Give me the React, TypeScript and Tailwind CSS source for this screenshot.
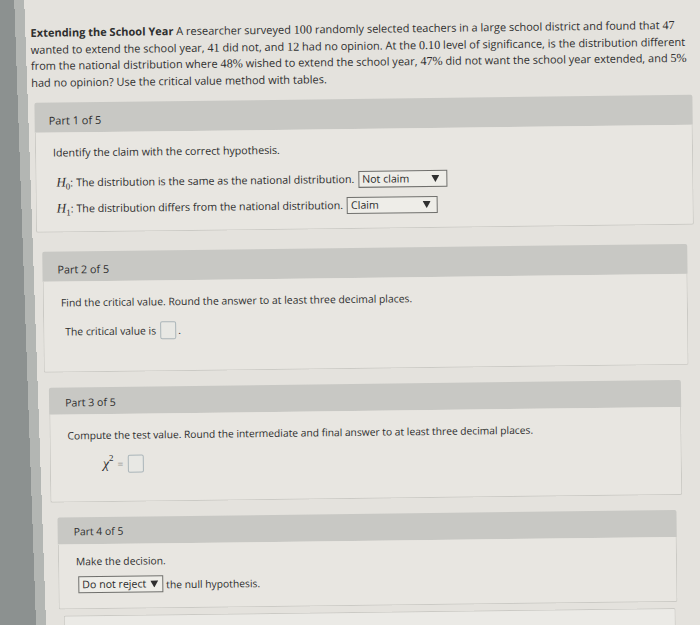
import React from "react";

function Arrow() {
  return (
    <svg width="8" height="7" viewBox="0 0 8 7" className="shrink-0">
      <polygon points="0,0 8,0 4,7" fill="#2f2f2f" />
    </svg>
  );
}

function Select({ label, w, pr }: { label: string; w: string; pr: string }) {
  return (
    <div
      className={`inline-flex h-[17px] items-center justify-between border border-[#6f6f6c] bg-[#eeede8] pl-[3px] ${w} ${pr}`}
    >
      <span className="text-[10.6px] leading-none text-[#2a2a2a]">{label}</span>
      <Arrow />
    </div>
  );
}

function Box() {
  return (
    <div className="inline-block h-[18px] w-[16px] rounded-[2px] border border-[#aab5b9] bg-[#e8e8e4]" />
  );
}

function H({ n }: { n: string }) {
  return (
    <span className="inline-flex items-baseline">
      <span className="font-['Liberation_Serif',serif] text-[13px] italic leading-none">H</span>
      <span className="relative top-[3px] font-['Liberation_Serif',serif] text-[9px] leading-none">{n}</span>
      <span>:</span>
    </span>
  );
}

const serif = "font-['Liberation_Serif',serif] text-[12.2px] leading-[12px]";

export default function App() {
  return (
    <div className="relative h-[625px] w-[700px] overflow-hidden bg-[linear-gradient(88deg,#8c9190_0_36px,#b3b6b3_36px_46px,#e4e2dd_46px)] font-['Open_Sans',sans-serif] text-[#2f2f2f]">
      <div className="h-[625px] w-[700px] rotate-[-0.7deg]">
        {/* Intro */}
        <div className="pl-[34px] pt-[21px] text-[11px] leading-[16.5px]">
          <div className="whitespace-nowrap">
            <span className="font-bold">Extending the School Year</span> A researcher surveyed{" "}
            <span className={serif}>100</span> randomly selected teachers in a large school district and found that{" "}
            <span className={serif}>47</span>
          </div>
          <div className="whitespace-nowrap">
            wanted to extend the school year, <span className={serif}>41</span> did not, and{" "}
            <span className={serif}>12</span> had no opinion. At the <span className={serif}>0.10</span> level of
            significance, is the distribution different
          </div>
          <div className="whitespace-nowrap">
            from the national distribution where <span className={serif}>48%</span> wished to extend the school year,{" "}
            <span className={serif}>47%</span> did not want the school year extended, and{" "}
            <span className={serif}>5%</span>
          </div>
          <div className="whitespace-nowrap">had no opinion? Use the critical value method with tables.</div>
        </div>

        {/* Part 1 */}
        <div className="ml-[37px] mr-[5px] mt-[12px]">
          <div className="h-[30px] rounded-t-[2px] bg-[#c8c8c4] pl-[14px] pt-[10px] text-[11px] leading-[16px]">
            Part 1 of 5
          </div>
          <div className="h-[100px] rounded-b-[2px] border border-t-0 border-[#cbcac5] bg-[#e8e6e1] pl-[17px] pt-[12px] text-[10.7px] leading-[16px]">
            <div>Identify the claim with the correct hypothesis.</div>
            <div className="ml-[3px] mt-[13px] flex h-[18px] items-center gap-[4px]">
              <span className="inline-flex items-baseline gap-[3px]">
                <H n="0" />
                <span>The distribution is the same as the national distribution.</span>
              </span>
              <Select label="Not claim" w="w-[89px]" pr="pr-[7px]" />
            </div>
            <div className="ml-[3px] mt-[8px] flex h-[18px] items-center gap-[4px]">
              <span className="inline-flex items-baseline gap-[3px]">
                <H n="1" />
                <span>The distribution differs from the national distribution.</span>
              </span>
              <Select label="Claim" w="w-[91px]" pr="pr-[6px]" />
            </div>
          </div>
        </div>

        {/* Part 2 */}
        <div className="ml-[43px] mr-[12px] mt-[19px]">
          <div className="h-[30px] rounded-t-[2px] bg-[#c8c8c4] pl-[15px] pt-[10px] text-[10.8px] leading-[16px]">
            Part 2 of 5
          </div>
          <div className="h-[91px] rounded-b-[2px] border border-t-0 border-[#cbcac5] bg-[#e8e6e1] pl-[17px] pt-[13px] text-[10.4px] leading-[16px]">
            <div>Find the critical value. Round the answer to at least three decimal places.</div>
            <div className="ml-[4px] mt-[12px] flex h-[18px] items-center gap-[4px]">
              <span>The critical value is</span>
              <Box />
              <span className="-ml-[2px]">.</span>
            </div>
          </div>
        </div>

        {/* Part 3 */}
        <div className="ml-[48px] mr-[20px] mt-[15px]">
          <div className="h-[27px] rounded-t-[2px] bg-[#c8c8c4] pl-[16px] pt-[7px] text-[10.6px] leading-[16px]">
            Part 3 of 5
          </div>
          <div className="h-[88px] rounded-b-[2px] border border-t-0 border-[#cbcac5] bg-[#e8e6e1] pl-[17px] pt-[13px] text-[10.25px] leading-[16px]">
            <div>Compute the test value. Round the intermediate and final answer to at least three decimal places.</div>
            <div className="ml-[35px] mt-[12px] flex h-[18px] items-center gap-[4px]">
              <span className="inline-flex items-start">
                <span className="font-['Liberation_Serif',serif] text-[14px] italic leading-none">χ</span>
                <span className="relative -top-[3px] font-['Liberation_Serif',serif] text-[9px] leading-none">2</span>
              </span>
              <span className="text-[#9a9a96]">=</span>
              <Box />
            </div>
          </div>
        </div>

        {/* Part 4 */}
        <div className="ml-[55px] mr-[26px] mt-[15px]">
          <div className="h-[27px] rounded-t-[2px] bg-[#c8c8c4] pl-[16px] pt-[6px] text-[10.4px] leading-[16px]">
            Part 4 of 5
          </div>
          <div className="h-[65px] rounded-b-[2px] border border-t-0 border-[#cbcac5] bg-[#e8e6e1] pl-[17px] pt-[9px] text-[10.3px] leading-[16px]">
            <div>Make the decision.</div>
            <div className="ml-[2px] mt-[7px] flex h-[17px] items-center gap-[3px]">
              <Select label="Do not reject" w="w-[85px]" pr="pr-[4px]" />
              <span>the null hypothesis.</span>
            </div>
          </div>
        </div>

        {/* Part 5 (cut off) */}
        <div className="ml-[60px] mr-[28px] mt-[6px] h-[30px] rounded-t-[2px] border border-b-0 border-[#cbcac5] bg-[#ebeae6]" />
      </div>
    </div>
  );
}
